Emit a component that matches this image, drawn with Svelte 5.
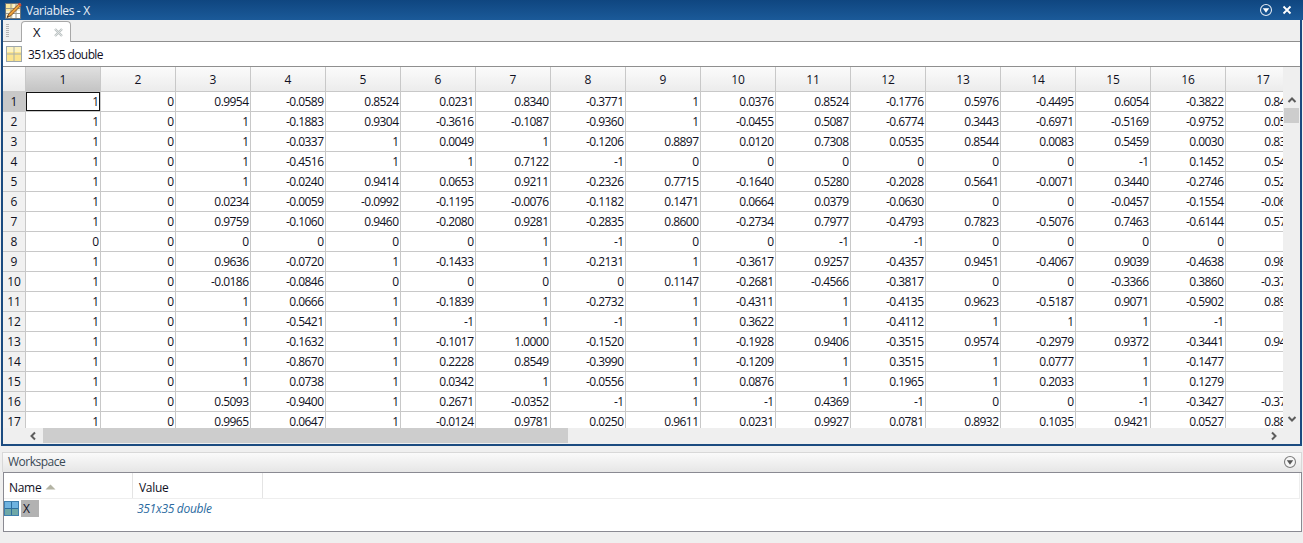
<script>
  const raw = `1 0 0.9954 -0.0589 0.8524 0.0231 0.8340 -0.3771 1 0.0376 0.8524 -0.1776 0.5976 -0.4495 0.6054 -0.3822 0.8412
1 0 1 -0.1883 0.9304 -0.3616 -0.1087 -0.9360 1 -0.0455 0.5087 -0.6774 0.3443 -0.6971 -0.5169 -0.9752 0.0535
1 0 1 -0.0337 1 0.0049 1 -0.1206 0.8897 0.0120 0.7308 0.0535 0.8544 0.0083 0.5459 0.0030 0.8317
1 0 1 -0.4516 1 1 0.7122 -1 0 0 0 0 0 0 -1 0.1452 0.5461
1 0 1 -0.0240 0.9414 0.0653 0.9211 -0.2326 0.7715 -0.1640 0.5280 -0.2028 0.5641 -0.0071 0.3440 -0.2746 0.5243
1 0 0.0234 -0.0059 -0.0992 -0.1195 -0.0076 -0.1182 0.1471 0.0664 0.0379 -0.0630 0 0 -0.0457 -0.1554 -0.0634
1 0 0.9759 -0.1060 0.9460 -0.2080 0.9281 -0.2835 0.8600 -0.2734 0.7977 -0.4793 0.7823 -0.5076 0.7463 -0.6144 0.5712
0 0 0 0 0 0 1 -1 0 0 -1 -1 0 0 0 0 0
1 0 0.9636 -0.0720 1 -0.1433 1 -0.2131 1 -0.3617 0.9257 -0.4357 0.9451 -0.4067 0.9039 -0.4638 0.9821
1 0 -0.0186 -0.0846 0 0 0 0 0.1147 -0.2681 -0.4566 -0.3817 0 0 -0.3366 0.3860 -0.3712
1 0 1 0.0666 1 -0.1839 1 -0.2732 1 -0.4311 1 -0.4135 0.9623 -0.5187 0.9071 -0.5902 0.8934
1 0 1 -0.5421 1 -1 1 -1 1 0.3622 1 -0.4112 1 1 1 -1 1
1 0 1 -0.1632 1 -0.1017 1.0000 -0.1520 1 -0.1928 0.9406 -0.3515 0.9574 -0.2979 0.9372 -0.3441 0.9423
1 0 1 -0.8670 1 0.2228 0.8549 -0.3990 1 -0.1209 1 0.3515 1 0.0777 1 -0.1477 1
1 0 1 0.0738 1 0.0342 1 -0.0556 1 0.0876 1 0.1965 1 0.2033 1 0.1279 1
1 0 0.5093 -0.9400 1 0.2671 -0.0352 -1 1 -1 0.4369 -1 0 0 -1 -0.3427 -0.3745
1 0 0.9965 0.0647 1 -0.0124 0.9781 0.0250 0.9611 0.0231 0.9927 0.0781 0.8932 0.1035 0.9421 0.0527 0.8861`;
  const rows = raw.split('\n').map((r) => r.trim().split(' '));
  const cols = Array.from({ length: 17 }, (_, i) => i + 1);
</script>

<div class="page">
  <section class="editor">
    <header class="titlebar">
      <svg class="title-icon" width="17" height="17" viewBox="0 0 17 17">
        <rect x="0.500" y="1.500" width="15" height="15" fill="#f6f0d0" stroke="#6e7478"/>
        <rect x="1" y="2" width="7" height="7" fill="#fbe9a0"/>
        <rect x="8" y="9" width="7" height="7" fill="#ffffff"/>
        <path d="M6 2v14M11 2v14M1 6.500h14M1 11.500h14" stroke="#9a9a8c" fill="none"/>
        <path d="M14.200 1.500 3.800 11.800 2 15.500l3.800-1.700L16 3.400z" fill="#eda23c" stroke="#6d3a12" stroke-width="0.800"/>
        <path d="M14.500 0.800 16.600 3 15.200 4.300 13.100 2.200z" fill="#d4483c"/>
        <path d="M2 15.500l.9-2 1 1z" fill="#2a2a2a"/>
      </svg>
      <span class="title-text">Variables - X</span>
      <span class="spacer"></span>
      <svg width="14" height="14" viewBox="0 0 14 14">
        <circle cx="7" cy="7" r="5.500" fill="none" stroke="#dfe8f2" stroke-width="1.100"/>
        <path d="M3.800 5.200h6.400L7 9.700z" fill="#ffffff"/>
      </svg>
      <svg class="close" width="10" height="10" viewBox="0 0 10 10">
        <path d="M1.500 1.500l7 7M8.500 1.500l-7 7" stroke="#ffffff" stroke-width="1.800" fill="none"/>
      </svg>
    </header>

    <div class="tabstrip">
      <span class="grip"></span>
      <div class="tab">
        <span class="tab-name">X</span>
        <svg width="11" height="11" viewBox="0 0 11 11">
          <path d="M2 2l7 7M9 2l-7 7" stroke="#bcc2c2" stroke-width="2.400" fill="none"/>
          <path d="M2 2l7 7M9 2l-7 7" stroke="#e4e8e8" stroke-width="0.800" fill="none"/>
        </svg>
      </div>
    </div>

    <div class="infobar">
      <svg width="16" height="16" viewBox="0 0 16 16">
        <rect x="0.500" y="0.500" width="15" height="15" fill="#fbe48e" stroke="#9ea7ac"/>
        <rect x="1" y="1" width="14" height="5" fill="#fdf3c0"/>
        <path d="M8 1v14M1 8h14" stroke="#aab0a8" fill="none"/>
      </svg>
      <span>351x35 double</span>
    </div>

    <div class="viewer">
      <div class="sheet">
        <div class="grid">
          <div class="head corner"></div>
          {#each cols as c}
            <div class="head" class:active={c === 1}>{c}</div>
          {/each}
          {#each rows as row, r}
            <div class="rowhead" class:active={r === 0}>{r + 1}</div>
            {#each row as value, c}
              <div class="cell" class:selected={r === 0 && c === 0}>{value}</div>
            {/each}
          {/each}
        </div>
      </div>
      <div class="vscroll">
        <svg width="10" height="8" viewBox="0 0 10 8">
          <path d="M1.500 6 5 2.500 8.500 6" stroke="#5c5c5c" stroke-width="2" fill="none"/>
        </svg>
        <span class="vthumb"></span>
        <span class="spacer"></span>
        <svg width="10" height="8" viewBox="0 0 10 8">
          <path d="M1.500 2 5 5.500 8.500 2" stroke="#5c5c5c" stroke-width="2" fill="none"/>
        </svg>
      </div>
      <div class="hscroll">
        <svg width="8" height="10" viewBox="0 0 8 10">
          <path d="M6 1.500 2.500 5 6 8.500" stroke="#5c5c5c" stroke-width="2" fill="none"/>
        </svg>
        <span class="hthumb"></span>
        <span class="spacer"></span>
        <svg width="8" height="10" viewBox="0 0 8 10">
          <path d="M2 1.500 5.500 5 2 8.500" stroke="#5c5c5c" stroke-width="2" fill="none"/>
        </svg>
      </div>
    </div>
  </section>

  <section class="workspace">
    <header class="ws-title">
      <span>Workspace</span>
      <svg width="14" height="14" viewBox="0 0 14 14">
        <circle cx="7" cy="7" r="5.500" fill="#f6f6f6" stroke="#7c7c7c" stroke-width="1.100"/>
        <path d="M3.800 5.200h6.400L7 9.700z" fill="#555555"/>
      </svg>
    </header>
    <div class="ws-table">
      <div class="ws-head">
        <div class="ws-col name">Name
          <svg width="11" height="6" viewBox="0 0 11 6"><path d="M0.500 5.500h10L5.500 0.500z" fill="#b4b4a4"/></svg>
        </div>
        <div class="ws-col value">Value</div>
        <div class="ws-col rest"></div>
      </div>
      <div class="ws-row">
        <svg width="15" height="15" viewBox="0 0 15 15">
          <rect x="0.500" y="0.500" width="14" height="14" fill="#6fb3e0" stroke="#3f7fae"/>
          <rect x="1" y="8" width="13" height="6" fill="#6fa8a8"/>
          <path d="M7.500 1v13M1 7.500h13" stroke="#2f6f9e" fill="none"/>
        </svg>
        <span class="ws-name">X</span>
        <span class="ws-value">351x35 double</span>
      </div>
    </div>
  </section>
</div>

<style>
  :global(body) {
    margin: 0;
    background: #efefef;
  }

  .page {
    width: 1303px;
    height: 543px;
    overflow: hidden;
    display: flex;
    flex-direction: column;
    background: #efefef;
    color: #10101e;
    font-family: "Open Sans", "Noto Sans", sans-serif;
    font-size: 12px;
    letter-spacing: -0.3px;
  }

  .editor {
    height: 446px;
    flex: none;
    box-sizing: border-box;
    margin: 0 1px;
    display: flex;
    flex-direction: column;
    border: 2px solid #1b4b80;
    border-top: 0;
    background: #efefef;
  }

  .titlebar {
    height: 20px;
    margin: 0 -3px;
    flex: none;
    display: flex;
    align-items: center;
    padding: 0 11px 0 5px;
    background: linear-gradient(#0f4680, #1b5a99);
    color: #e8eef6;
  }

  .title-icon {
    margin-right: 4px;
  }

  .title-text {
    font-size: 12px;
    letter-spacing: -0.35px;
  }

  .spacer {
    flex: 1;
  }

  .close {
    margin-left: 9px;
  }

  .tabstrip {
    height: 22px;
    flex: none;
    box-sizing: border-box;
    display: flex;
    align-items: flex-end;
    padding-left: 3px;
    border-bottom: 1px solid #8f8f8f;
    background: #efefef;
  }

  .grip {
    width: 3px;
    height: 14px;
    margin: 0 12px 3px 0;
    background: repeating-linear-gradient(#b4b4b4 0 1px, #efefef 1px 2px);
  }

  .tab {
    width: 50px;
    height: 21px;
    box-sizing: border-box;
    margin-bottom: -1px;
    display: flex;
    align-items: center;
    gap: 13px;
    padding-left: 11px;
    border: 1px solid #a8a8a8;
    border-bottom: 0;
    border-radius: 4px 4px 0 0;
    background: #ffffff;
    font-size: 13px;
  }

  .infobar {
    height: 25px;
    flex: none;
    box-sizing: border-box;
    display: flex;
    align-items: center;
    gap: 6px;
    padding-left: 3px;
    background: #ffffff;
    border-bottom: 1px solid #8f8f8f;
    letter-spacing: -0.6px;
  }

  .viewer {
    flex: 1;
    min-height: 0;
    display: grid;
    grid-template-columns: 1fr 17px;
    grid-template-rows: 1fr 16px;
    background: #efefef;
  }

  .sheet {
    overflow: hidden;
    background: #ffffff;
    min-width: 0;
    min-height: 0;
  }

  .grid {
    display: grid;
    width: max-content;
    grid-template-columns: 23px repeat(17, 75px);
    grid-auto-rows: 20px;
    grid-template-rows: 25px;
    font-size: 12px;
    letter-spacing: -0.55px;
  }

  .head {
    display: flex;
    align-items: center;
    justify-content: center;
    box-sizing: border-box;
    padding-top: 1px;
    border-right: 1px solid #c8c8c8;
    border-bottom: 1px solid #c8c8c8;
    background: linear-gradient(#fbfbfb, #ececec);
    letter-spacing: 0;
  }

  .head.active {
    background: linear-gradient(#e0e0e0, #c4c4c4);
  }

  .rowhead {
    display: flex;
    align-items: center;
    justify-content: center;
    box-sizing: border-box;
    border-right: 1px solid #c8c8c8;
    border-bottom: 1px solid #c8c8c8;
    background: #f1f1f1;
    letter-spacing: 0;
  }

  .rowhead.active {
    background: #c8c8c8;
  }

  .cell {
    display: flex;
    align-items: center;
    justify-content: flex-end;
    box-sizing: border-box;
    padding-right: 1.500px;
    border-right: 1px solid #c8c8c8;
    border-bottom: 1px solid #c8c8c8;
    background: #ffffff;
  }

  .cell.selected {
    box-shadow: inset 0 0 0 1px #111111;
  }

  .vscroll {
    display: flex;
    flex-direction: column;
    align-items: center;
    padding: 29px 0 5px;
    min-height: 0;
  }

  .vthumb {
    width: 15px;
    height: 15px;
    margin-top: 4px;
    background: #cdcdcd;
  }

  .hscroll {
    grid-column: 1 / span 2;
    display: flex;
    align-items: center;
    padding: 0 22px 0 26px;
  }

  .hthumb {
    width: 525px;
    height: 15px;
    margin-left: 6px;
    align-self: flex-start;
    background: #cdcdcd;
  }

  .workspace {
    margin: 6px 1px 0 2px;
    height: 80px;
    flex: none;
    display: flex;
    flex-direction: column;
    box-sizing: border-box;
  }

  .ws-title {
    height: 20px;
    flex: none;
    box-sizing: border-box;
    display: flex;
    align-items: center;
    justify-content: space-between;
    padding: 0 4px 2px 5px;
    border: 1px solid #d8d8d8;
    border-bottom: 0;
    background: linear-gradient(#fafafa, #e6e6e6);
    color: #3a4a56;
    letter-spacing: -0.5px;
  }

  .ws-table {
    flex: 1;
    margin-left: 1px;
    box-sizing: border-box;
    border: 1px solid #8a8a92;
    background: #ffffff;
  }

  .ws-head {
    height: 26px;
    box-sizing: border-box;
    display: flex;
    border-bottom: 1px solid #eeeeee;
    margin-right: 1px;
  }

  .ws-col {
    box-sizing: border-box;
    display: flex;
    align-items: center;
    gap: 4px;
    padding: 3px 0 0 5px;
    border-right: 1px solid #e4e4e4;
  }

  .name {
    width: 129px;
  }

  .value {
    width: 130px;
    padding-left: 6px;
  }

  .rest {
    flex: 1;
    border-right: 1px solid #eeeeee;
  }

  .ws-row {
    height: 18px;
    display: flex;
    align-items: center;
  }

  .ws-name {
    width: 18px;
    height: 17px;
    margin-left: 2px;
    padding-left: 2px;
    box-sizing: border-box;
    line-height: 17px;
    background: #b2b2b2;
  }

  .ws-value {
    margin-left: 98px;
    font-style: italic;
    color: #2a6aa0;
  }
</style>
